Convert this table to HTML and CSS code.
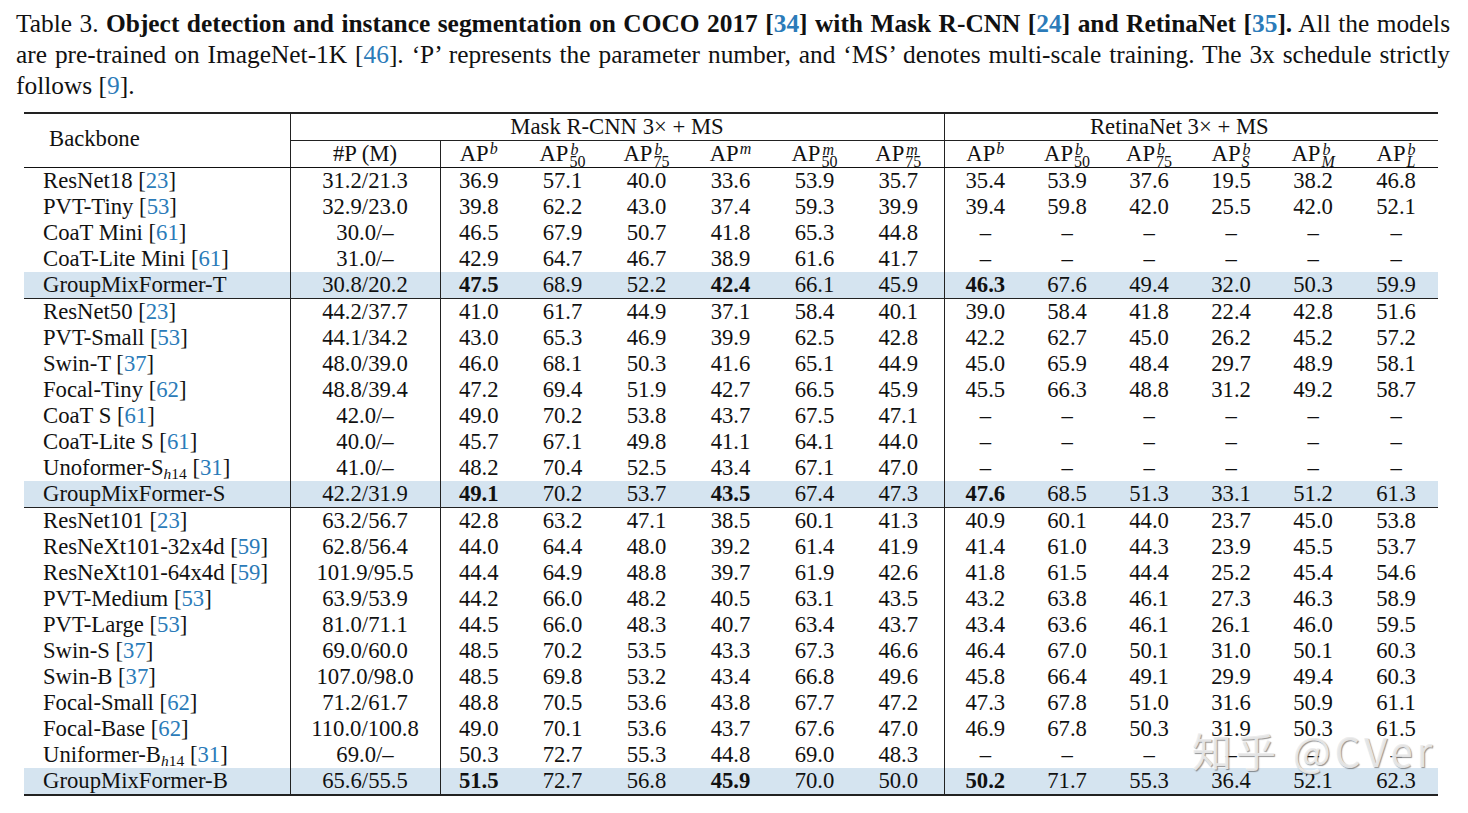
FILE: index.html
```html
<!DOCTYPE html>
<html lang="en">
<head>
<meta charset="utf-8">
<title>Table 3</title>
<link rel="stylesheet" href="styles.css">
</head>
<body>
<div class="page">
  <p class="caption">
    <span class="cl">Table 3. <b>Object detection and instance segmentation on COCO 2017 [<span class="cite">34</span>] with Mask R-CNN [<span class="cite">24</span>] and RetinaNet [<span class="cite">35</span>].</b> All the models</span>
    <span class="cl">are pre-trained on ImageNet-1K [<span class="cite">46</span>]. ‘P’ represents the parameter number, and ‘MS’ denotes multi-scale training. The 3x schedule strictly</span>
    <span class="cl-last">follows [<span class="cite">9</span>].</span>
  </p>

  <table class="results">
    <colgroup>
      <col class="c-bb"><col class="c-p">
      <col class="c-m"><col class="c-m"><col class="c-m"><col class="c-m"><col class="c-m"><col class="c-m">
      <col class="c-r"><col class="c-r"><col class="c-r"><col class="c-r"><col class="c-r"><col class="c-rl">
    </colgroup>
    <thead>
      <tr class="h1">
        <th rowspan="2" class="bb vr">Backbone</th>
        <th colspan="7" class="grp vr">Mask R-CNN 3× + MS</th>
        <th colspan="6" class="grp grp-r">RetinaNet 3× + MS</th>
      </tr>
      <tr class="h2">
        <th class="vr">#P (M)</th>
        <th class="m">AP<sup class="s">b</sup></th>
        <th class="m">AP<span class="st"><span class="su">b</span><span class="sb">50</span></span></th>
        <th class="m">AP<span class="st"><span class="su">b</span><span class="sb">75</span></span></th>
        <th class="m">AP<sup class="s">m</sup></th>
        <th class="m">AP<span class="st"><span class="su">m</span><span class="sb">50</span></span></th>
        <th class="m vr">AP<span class="st"><span class="su">m</span><span class="sb">75</span></span></th>
        <th>AP<sup class="s">b</sup></th>
        <th>AP<span class="st"><span class="su">b</span><span class="sb">50</span></span></th>
        <th>AP<span class="st"><span class="su">b</span><span class="sb">75</span></span></th>
        <th>AP<span class="st"><span class="su">b</span><span class="sb it">S</span></span></th>
        <th>AP<span class="st"><span class="su">b</span><span class="sb it">M</span></span></th>
        <th>AP<span class="st"><span class="su">b</span><span class="sb it">L</span></span></th>
      </tr>
    </thead>
    <tbody>
      <tr><td class="name vr">ResNet18 [<span class="cite">23</span>]</td><td class="vr">31.2/21.3</td><td class="m">36.9</td><td class="m">57.1</td><td class="m">40.0</td><td class="m">33.6</td><td class="m">53.9</td><td class="m vr">35.7</td><td>35.4</td><td>53.9</td><td>37.6</td><td>19.5</td><td>38.2</td><td>46.8</td></tr>
      <tr><td class="name vr">PVT-Tiny [<span class="cite">53</span>]</td><td class="vr">32.9/23.0</td><td class="m">39.8</td><td class="m">62.2</td><td class="m">43.0</td><td class="m">37.4</td><td class="m">59.3</td><td class="m vr">39.9</td><td>39.4</td><td>59.8</td><td>42.0</td><td>25.5</td><td>42.0</td><td>52.1</td></tr>
      <tr><td class="name vr">CoaT Mini [<span class="cite">61</span>]</td><td class="vr">30.0/–</td><td class="m">46.5</td><td class="m">67.9</td><td class="m">50.7</td><td class="m">41.8</td><td class="m">65.3</td><td class="m vr">44.8</td><td>–</td><td>–</td><td>–</td><td>–</td><td>–</td><td>–</td></tr>
      <tr><td class="name vr">CoaT-Lite Mini [<span class="cite">61</span>]</td><td class="vr">31.0/–</td><td class="m">42.9</td><td class="m">64.7</td><td class="m">46.7</td><td class="m">38.9</td><td class="m">61.6</td><td class="m vr">41.7</td><td>–</td><td>–</td><td>–</td><td>–</td><td>–</td><td>–</td></tr>
      <tr class="ours sep"><td class="name vr">GroupMixFormer-T</td><td class="vr">30.8/20.2</td><td class="m"><b>47.5</b></td><td class="m">68.9</td><td class="m">52.2</td><td class="m"><b>42.4</b></td><td class="m">66.1</td><td class="m vr">45.9</td><td><b>46.3</b></td><td>67.6</td><td>49.4</td><td>32.0</td><td>50.3</td><td>59.9</td></tr>

      <tr><td class="name vr">ResNet50 [<span class="cite">23</span>]</td><td class="vr">44.2/37.7</td><td class="m">41.0</td><td class="m">61.7</td><td class="m">44.9</td><td class="m">37.1</td><td class="m">58.4</td><td class="m vr">40.1</td><td>39.0</td><td>58.4</td><td>41.8</td><td>22.4</td><td>42.8</td><td>51.6</td></tr>
      <tr><td class="name vr">PVT-Small [<span class="cite">53</span>]</td><td class="vr">44.1/34.2</td><td class="m">43.0</td><td class="m">65.3</td><td class="m">46.9</td><td class="m">39.9</td><td class="m">62.5</td><td class="m vr">42.8</td><td>42.2</td><td>62.7</td><td>45.0</td><td>26.2</td><td>45.2</td><td>57.2</td></tr>
      <tr><td class="name vr">Swin-T [<span class="cite">37</span>]</td><td class="vr">48.0/39.0</td><td class="m">46.0</td><td class="m">68.1</td><td class="m">50.3</td><td class="m">41.6</td><td class="m">65.1</td><td class="m vr">44.9</td><td>45.0</td><td>65.9</td><td>48.4</td><td>29.7</td><td>48.9</td><td>58.1</td></tr>
      <tr><td class="name vr">Focal-Tiny [<span class="cite">62</span>]</td><td class="vr">48.8/39.4</td><td class="m">47.2</td><td class="m">69.4</td><td class="m">51.9</td><td class="m">42.7</td><td class="m">66.5</td><td class="m vr">45.9</td><td>45.5</td><td>66.3</td><td>48.8</td><td>31.2</td><td>49.2</td><td>58.7</td></tr>
      <tr><td class="name vr">CoaT S [<span class="cite">61</span>]</td><td class="vr">42.0/–</td><td class="m">49.0</td><td class="m">70.2</td><td class="m">53.8</td><td class="m">43.7</td><td class="m">67.5</td><td class="m vr">47.1</td><td>–</td><td>–</td><td>–</td><td>–</td><td>–</td><td>–</td></tr>
      <tr><td class="name vr">CoaT-Lite S [<span class="cite">61</span>]</td><td class="vr">40.0/–</td><td class="m">45.7</td><td class="m">67.1</td><td class="m">49.8</td><td class="m">41.1</td><td class="m">64.1</td><td class="m vr">44.0</td><td>–</td><td>–</td><td>–</td><td>–</td><td>–</td><td>–</td></tr>
      <tr><td class="name vr">Unoformer-S<span class="lsub"><i>h</i>14</span> [<span class="cite">31</span>]</td><td class="vr">41.0/–</td><td class="m">48.2</td><td class="m">70.4</td><td class="m">52.5</td><td class="m">43.4</td><td class="m">67.1</td><td class="m vr">47.0</td><td>–</td><td>–</td><td>–</td><td>–</td><td>–</td><td>–</td></tr>
      <tr class="ours sep"><td class="name vr">GroupMixFormer-S</td><td class="vr">42.2/31.9</td><td class="m"><b>49.1</b></td><td class="m">70.2</td><td class="m">53.7</td><td class="m"><b>43.5</b></td><td class="m">67.4</td><td class="m vr">47.3</td><td><b>47.6</b></td><td>68.5</td><td>51.3</td><td>33.1</td><td>51.2</td><td>61.3</td></tr>

      <tr><td class="name vr">ResNet101 [<span class="cite">23</span>]</td><td class="vr">63.2/56.7</td><td class="m">42.8</td><td class="m">63.2</td><td class="m">47.1</td><td class="m">38.5</td><td class="m">60.1</td><td class="m vr">41.3</td><td>40.9</td><td>60.1</td><td>44.0</td><td>23.7</td><td>45.0</td><td>53.8</td></tr>
      <tr><td class="name vr">ResNeXt101-32x4d [<span class="cite">59</span>]</td><td class="vr">62.8/56.4</td><td class="m">44.0</td><td class="m">64.4</td><td class="m">48.0</td><td class="m">39.2</td><td class="m">61.4</td><td class="m vr">41.9</td><td>41.4</td><td>61.0</td><td>44.3</td><td>23.9</td><td>45.5</td><td>53.7</td></tr>
      <tr><td class="name vr">ResNeXt101-64x4d [<span class="cite">59</span>]</td><td class="vr">101.9/95.5</td><td class="m">44.4</td><td class="m">64.9</td><td class="m">48.8</td><td class="m">39.7</td><td class="m">61.9</td><td class="m vr">42.6</td><td>41.8</td><td>61.5</td><td>44.4</td><td>25.2</td><td>45.4</td><td>54.6</td></tr>
      <tr><td class="name vr">PVT-Medium [<span class="cite">53</span>]</td><td class="vr">63.9/53.9</td><td class="m">44.2</td><td class="m">66.0</td><td class="m">48.2</td><td class="m">40.5</td><td class="m">63.1</td><td class="m vr">43.5</td><td>43.2</td><td>63.8</td><td>46.1</td><td>27.3</td><td>46.3</td><td>58.9</td></tr>
      <tr><td class="name vr">PVT-Large [<span class="cite">53</span>]</td><td class="vr">81.0/71.1</td><td class="m">44.5</td><td class="m">66.0</td><td class="m">48.3</td><td class="m">40.7</td><td class="m">63.4</td><td class="m vr">43.7</td><td>43.4</td><td>63.6</td><td>46.1</td><td>26.1</td><td>46.0</td><td>59.5</td></tr>
      <tr><td class="name vr">Swin-S [<span class="cite">37</span>]</td><td class="vr">69.0/60.0</td><td class="m">48.5</td><td class="m">70.2</td><td class="m">53.5</td><td class="m">43.3</td><td class="m">67.3</td><td class="m vr">46.6</td><td>46.4</td><td>67.0</td><td>50.1</td><td>31.0</td><td>50.1</td><td>60.3</td></tr>
      <tr><td class="name vr">Swin-B [<span class="cite">37</span>]</td><td class="vr">107.0/98.0</td><td class="m">48.5</td><td class="m">69.8</td><td class="m">53.2</td><td class="m">43.4</td><td class="m">66.8</td><td class="m vr">49.6</td><td>45.8</td><td>66.4</td><td>49.1</td><td>29.9</td><td>49.4</td><td>60.3</td></tr>
      <tr><td class="name vr">Focal-Small [<span class="cite">62</span>]</td><td class="vr">71.2/61.7</td><td class="m">48.8</td><td class="m">70.5</td><td class="m">53.6</td><td class="m">43.8</td><td class="m">67.7</td><td class="m vr">47.2</td><td>47.3</td><td>67.8</td><td>51.0</td><td>31.6</td><td>50.9</td><td>61.1</td></tr>
      <tr><td class="name vr">Focal-Base [<span class="cite">62</span>]</td><td class="vr">110.0/100.8</td><td class="m">49.0</td><td class="m">70.1</td><td class="m">53.6</td><td class="m">43.7</td><td class="m">67.6</td><td class="m vr">47.0</td><td>46.9</td><td>67.8</td><td>50.3</td><td>31.9</td><td>50.3</td><td>61.5</td></tr>
      <tr><td class="name vr">Uniformer-B<span class="lsub"><i>h</i>14</span> [<span class="cite">31</span>]</td><td class="vr">69.0/–</td><td class="m">50.3</td><td class="m">72.7</td><td class="m">55.3</td><td class="m">44.8</td><td class="m">69.0</td><td class="m vr">48.3</td><td>–</td><td>–</td><td>–</td><td>–</td><td>–</td><td>–</td></tr>
      <tr class="ours last"><td class="name vr">GroupMixFormer-B</td><td class="vr">65.6/55.5</td><td class="m"><b>51.5</b></td><td class="m">72.7</td><td class="m">56.8</td><td class="m"><b>45.9</b></td><td class="m">70.0</td><td class="m vr">50.0</td><td><b>50.2</b></td><td>71.7</td><td>55.3</td><td>36.4</td><td>52.1</td><td>62.3</td></tr>
    </tbody>
  </table>

  <div class="watermark">知乎 @CVer</div>
</div>
</body>
</html>
```

FILE: styles.css
```css
html, body {
  margin: 0;
  padding: 0;
  background: #ffffff;
}

.page {
  position: relative;
  width: 1468px;
  height: 813px;
  padding: 8px 0 0 16px;
  box-sizing: border-box;
  font-family: "Liberation Serif", "Times New Roman", serif;
  color: #111111;
}

.caption {
  width: 1434px;
  margin: 0 0 11px 0;
  font-size: 25.4px;
  line-height: 31px;
}

.cl {
  display: block;
  text-align: justify;
  text-align-last: justify;
}

.cl-last {
  display: block;
  text-align: left;
}

.cite {
  color: #2b7bb9;
}

.results {
  margin-left: 8px;
  width: 1414px;
  table-layout: fixed;
  border-collapse: collapse;
  font-size: 22.7px;
  line-height: 26px;
  border-top: 2px solid #222222;
  border-bottom: 2px solid #222222;
}

.c-bb { width: 266px; }
.c-p { width: 150px; }
.c-m { width: 84px; }
.c-r { width: 82px; }
.c-rl { width: 84px; }

.results th,
.results td {
  padding: 0;
  height: 26px;
  text-align: center;
  vertical-align: middle;
  font-weight: normal;
  white-space: nowrap;
}

.results .h1 th {
  height: 25px;
}

.results .grp {
  border-bottom: 1px solid #222222;
}

.results .grp-r {
  padding-right: 24px;
}

.results .bb {
  text-align: left;
  padding-left: 25px;
  padding-bottom: 4px;
  border-bottom: 1px solid #111111;
}

.results .h2 th {
  border-bottom: 1px solid #111111;
}

.results .vr {
  border-right: 1px solid #222222;
}

.results .m {
  padding-right: 7px;
}

.results td.name {
  text-align: left;
  padding-left: 19px;
}

.results .ours td {
  background: #d5e4f0;
}

.results .sep td {
  border-bottom: 1px solid #222222;
}

.results b {
  font-weight: bold;
}

/* math scripts */
.s {
  font-size: 16px;
  font-style: italic;
  line-height: 0;
  vertical-align: 7.5px;
  margin-left: 1px;
}

.st {
  display: inline-block;
  vertical-align: -5.5px;
  margin-bottom: -4px;
  margin-left: 1px;
  font-size: 16px;
  line-height: 12px;
  text-align: left;
}

.su {
  display: block;
  font-style: italic;
  padding-left: 1px;
}

.sb {
  display: block;
}

.sb.it {
  font-style: italic;
}

.lsub {
  font-size: 15.5px;
  line-height: 0;
  vertical-align: -4px;
}

.watermark {
  position: absolute;
  left: 1192px;
  top: 726px;
  font-family: "Noto Sans CJK SC", "Noto Sans", sans-serif;
  font-size: 40px;
  line-height: 48px;
  letter-spacing: 4px;
  color: rgba(236, 236, 236, 0.92);
  text-shadow: 1px 1px 1px rgba(60, 60, 60, 0.55), -1px -1px 0 rgba(255, 255, 255, 0.6);
  white-space: nowrap;
}
```
